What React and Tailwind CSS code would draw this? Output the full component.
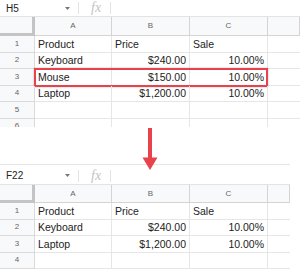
import React from 'react';

const topRows = [
  ['Product', 'Price', 'Sale'],
  ['Keyboard', '$240.00', '10.00%'],
  ['Mouse', '$150.00', '10.00%'],
  ['Laptop', '$1,200.00', '10.00%'],
  ['', '', ''],
  ['', '', ''],
];

const bottomRows = [
  ['Product', 'Price', 'Sale'],
  ['Keyboard', '$240.00', '10.00%'],
  ['Laptop', '$1,200.00', '10.00%'],
  ['', '', ''],
];

function FormulaBar({ cell, height }) {
  return (
    <div className={`flex items-center border-b border-[#e3e3e3] text-[10px] text-[#222] ${height}`}>
      <span className="w-[62px] pl-[6px]">{cell}</span>
      <svg width="5" height="3" viewBox="0 0 5 3" className="ml-[3px]">
        <path d="M0 0h5L2.5 3z" fill="#777" />
      </svg>
      <span className="w-px h-[12px] bg-[#e3e3e3] ml-[8px]" />
      <span className="ml-[12px] italic text-[14px] leading-none text-[#c4c4c4] font-['Liberation_Serif',serif]">fx</span>
      <span className="w-px h-[12px] bg-[#e3e3e3] ml-[9px]" />
    </div>
  );
}

function Row({ num, cells, highlight }) {
  return (
    <div className="relative grid grid-cols-[35px_77px_78px_78px_1fr] h-[16.5px] text-[10.5px] leading-none text-[#222]">
      <div className="flex items-center justify-center bg-[#f8f9fa] border-r border-b border-[#dadada] text-[8px] text-[#666]">{num}</div>
      <div className="flex items-center pl-[3px] border-r border-b border-[#e6e6e6]">{cells[0]}</div>
      <div className={`flex items-center border-r border-b border-[#e6e6e6] ${num === 1 ? 'pl-[3px]' : 'justify-end pr-[3px]'}`}>{cells[1]}</div>
      <div className={`flex items-center border-r border-b border-[#e6e6e6] ${num === 1 ? 'pl-[3px]' : 'justify-end pr-[3px]'}`}>{cells[2]}</div>
      <div className="border-b border-[#e6e6e6]" />
      {highlight && (
        <div className="absolute left-[34px] w-[234px] -top-[1px] -bottom-[1px] border-2 border-[#e8434c] shadow-[0_0_2px_rgba(0,0,0,0.25)]" />
      )}
    </div>
  );
}

function Sheet({ cell, rows, highlight, barHeight, headHeight, width, height }) {
  return (
    <div className={`overflow-hidden ${width} ${height}`}>
      <FormulaBar cell={cell} height={barHeight} />
      <div className={`grid grid-cols-[35px_77px_78px_78px_1fr] bg-[#f8f9fa] text-[8px] text-[#666] ${headHeight}`}>
        <div className="border-r-[3px] border-b-[3px] border-[#c4c4c4]" />
        {['A', 'B', 'C', ''].map((c, i) => (
          <div key={i} className="flex items-center justify-center border-r border-b border-[#d4d4d4]">{c}</div>
        ))}
      </div>
      {rows.map((r, i) => (
        <Row key={i} num={i + 1} cells={r} highlight={highlight === i + 1} />
      ))}
    </div>
  );
}

export default function App() {
  return (
    <div className="w-[300px] h-[269px] bg-white overflow-hidden font-['Liberation_Sans',Arial,sans-serif]">
      <Sheet cell="H5" rows={topRows} highlight={3} barHeight="h-[17px]" headHeight="h-[19px]" width="w-[300px]" height="h-[127px]" />
      <div className="relative z-10 h-[37px]">
        <svg width="300" height="44" viewBox="0 0 300 44" className="overflow-visible">
          <rect x="148" y="1" width="4" height="32" fill="#e8434c" />
          <path d="M142.5 30.5h15L150 43z" fill="#e8434c" />
        </svg>
      </div>
      <div className="w-[290px] border-t border-[#e6e6e6] pt-[2px]">
        <Sheet cell="F22" rows={bottomRows} barHeight="h-[18px]" headHeight="h-[18px]" width="w-[290px]" height="h-[110px]" />
      </div>
    </div>
  );
}
